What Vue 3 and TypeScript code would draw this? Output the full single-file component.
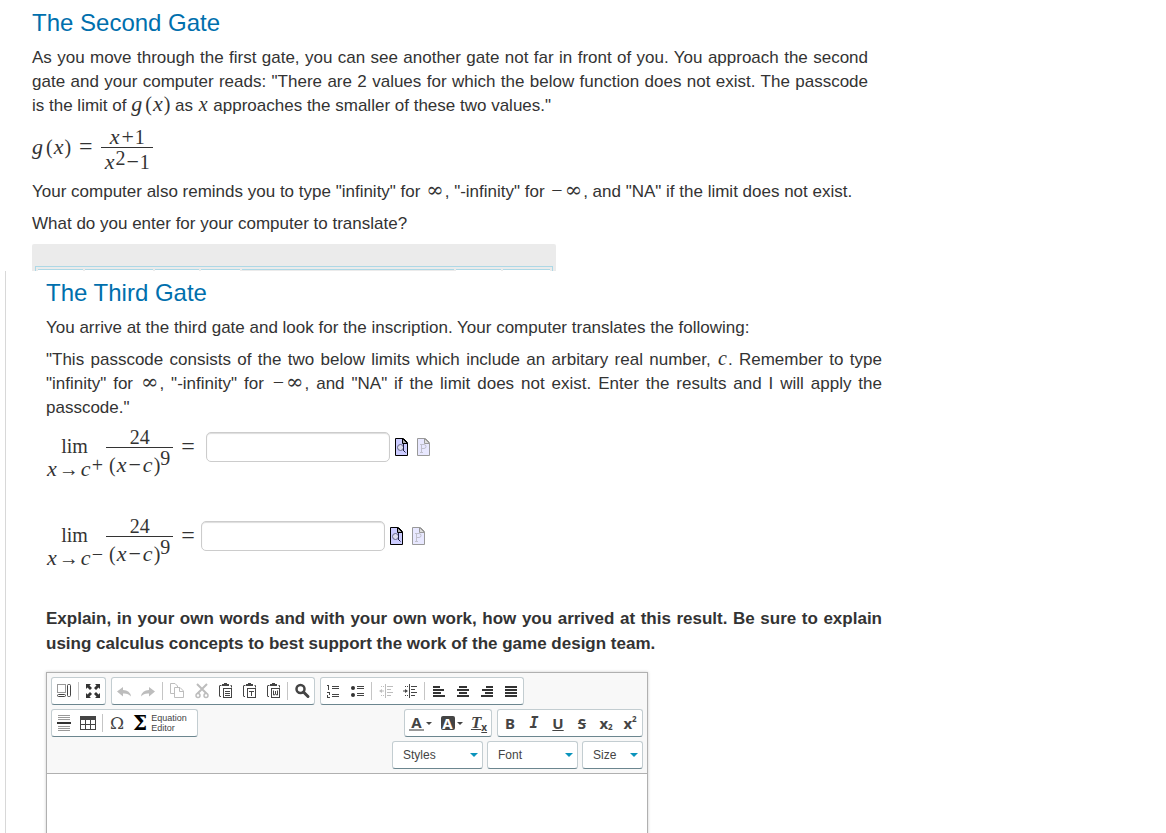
<script setup lang="ts">
import { ref } from 'vue'

interface Limit {
  id: string
  sign: string
  label: string
}

interface Tool {
  name: string
  icon?: string
  disabled?: boolean
  glyph?: string
  kind?: string
  caret?: boolean
}

const limits: Limit[] = [
  { id: 'right', sign: '+', label: 'Limit from the right' },
  { id: 'left', sign: '−', label: 'Limit from the left' },
]
const answers = ref<Record<string, string>>({ right: '', left: '' })

const clip =
  '<path d="M8.500 7.500h-1.500q-.5 0-.5.5v10q0 .5.5.5h1M17.500 7.500h1v2" fill="none" stroke="#444"/><path d="M9 8V6h2V5h3v1h2v2z" fill="#444"/><rect x="10.500" y="10.500" width="8" height="9" fill="#fff" stroke="#444"/>'

function indent(color: string, arrow: string): string {
  return `<g fill="${color}"><path d="M11 6h1v14h-1zM13 8h6v1h-6zM13 11h4v1h-4zM13 14h6v1h-6zM13 17h4v1h-4zM7 8h1v1H7zM9 8h1v1H9zM7 17h1v1H7zM9 17h1v1H9z"/>${arrow}</g>`
}

function bars(rows: number[][]): string {
  return rows
    .map(([x, w], i) => `<rect x="${x}" y="${8 + i * 3}" width="${w}" height="2" fill="#333"/>`)
    .join('')
}

const topGroups: Tool[][][] = [
  [
    [
      {
        name: 'Show blocks',
        icon: '<rect x="5.500" y="6.500" width="8" height="8" fill="none" stroke="#333" stroke-dasharray="1 1"/><rect x="15.500" y="6.500" width="3" height="12" rx="1" fill="none" stroke="#444"/><rect x="5.500" y="16.500" width="8" height="2" rx="1" fill="none" stroke="#444"/>',
      },
    ],
    [
      {
        name: 'Full screen',
        icon: '<path d="M5 6h5L8.500 7.500 11 10l-2 2-2.500-2.500L5 11zM19 6h-5l1.500 1.500L13 10l2 2 2.500-2.500L19 11zM5 20h5l-1.500-1.500L11 16l-2-2-2.500 2.500L5 15zM19 20h-5l1.500-1.500L13 16l2-2 2.500 2.500L19 15z" fill="#333"/>',
      },
    ],
  ],
  [
    [
      { name: 'Undo', disabled: true, icon: '<path d="M5 13.500L11 9v3q7 0 8 6.500-3-3.500-8-3v3z" fill="#bdbdbd"/>' },
      { name: 'Redo', disabled: true, icon: '<path d="M19 13.500L13 9v3q-7 0-8 6.500 3-3.500 8-3v3z" fill="#bdbdbd"/>' },
    ],
    [
      {
        name: 'Copy',
        disabled: true,
        icon: '<path d="M9 15.500H5.500v-10H10L12.500 8v1.500M9.500 9.500H15l3.500 3.500v6.500h-9zM14.500 10v3.500H18" fill="none" stroke="#bdbdbd"/>',
      },
      {
        name: 'Cut',
        disabled: true,
        icon: '<path d="M8 6l10 10M18 6L8 16" stroke="#bdbdbd" stroke-width="2"/><circle cx="9" cy="17.500" r="2" fill="#fff" stroke="#bdbdbd" stroke-width="1.500"/><circle cx="17" cy="17.500" r="2" fill="#fff" stroke="#bdbdbd" stroke-width="1.500"/>',
      },
      { name: 'Paste', icon: clip + '<path d="M12 13h5v1h-5zM12 15h5v1h-5zM12 17h5v1h-5z" fill="#444"/>' },
      { name: 'Paste as plain text', icon: clip + '<path d="M12 13h5v1h-2v4h-1v-4h-2z" fill="#444"/>' },
      { name: 'Paste from Word', icon: clip + '<path d="M12.500 12.500V17h1l1-1.500 1 1.500h1v-4.500M14.500 13v3" fill="none" stroke="#444"/>' },
    ],
    [
      {
        name: 'Find',
        icon: '<circle cx="10.500" cy="11" r="4" fill="none" stroke="#444" stroke-width="2.500"/><path d="M13.500 14l4.500 4.500" stroke="#444" stroke-width="3" stroke-linecap="round"/>',
      },
    ],
  ],
  [
    [
      {
        name: 'Numbered list',
        icon: '<path d="M11 8h7v1h-7zM11 10h7v1h-7zM11 16h7v1h-7zM11 18h7v1h-7zM6 7h2v5H7V8H6zM6 14h3v3H7v2h2v1H6v-3h2v-2H6z" fill="#444"/>',
      },
      {
        name: 'Bulleted list',
        icon: '<path d="M12 8h7v1h-7zM12 10h7v1h-7zM12 15h7v1h-7zM12 17h7v1h-7z" fill="#444"/><circle cx="8" cy="10" r="2" fill="#333"/><circle cx="8" cy="17" r="2" fill="#333"/>',
      },
    ],
    [
      { name: 'Decrease indent', disabled: true, icon: indent('#bdbdbd', '<path d="M5 13l3-2v1.500h2v1H8V15z"/>') },
      { name: 'Increase indent', icon: indent('#444', '<path d="M10 13l-3-2v1.500H5v1h2V15z"/>') },
    ],
    [
      { name: 'Align left', icon: bars([[6, 7], [6, 11], [6, 8], [6, 12]]) },
      { name: 'Center', icon: bars([[8, 8], [6, 12], [8, 8], [6, 12]]) },
      { name: 'Align right', icon: bars([[11, 7], [7, 11], [10, 8], [6, 12]]) },
      { name: 'Justify', icon: bars([[6, 12], [6, 12], [6, 12], [6, 12]]) },
    ],
  ],
]

const insertTools: Tool[] = [
  {
    name: 'Horizontal line',
    icon: '<path d="M6 5h12v1H6zM6 7h12v1H6zM6 9h12v1H6zM6 16h12v1H6zM6 18h12v1H6zM6 20h12v1H6z" fill="#999"/><path d="M5 12h14v2H5z" fill="#333"/>',
  },
  {
    name: 'Table',
    icon: '<path d="M4 6h16v14H4zM5 10v4h4v-4zM10 10v4h4v-4zM15 10v4h4v-4zM5 15v4h4v-4zM10 15v4h4v-4zM15 15v4h4v-4z" fill="#444" fill-rule="evenodd"/>',
  },
]

const colorTools: Tool[] = [
  { name: 'Text color', glyph: 'A', kind: 'fore', caret: true },
  { name: 'Background color', glyph: 'A', kind: 'back', caret: true },
  { name: 'Remove format', glyph: 'T', kind: 'clear' },
]

const fontTools: Tool[] = [
  { name: 'Bold', glyph: 'B', kind: 'bold' },
  { name: 'Italic', glyph: 'I', kind: 'italic' },
  { name: 'Underline', glyph: 'U', kind: 'underline' },
  { name: 'Strikethrough', glyph: 'S', kind: 'strike' },
  { name: 'Subscript', glyph: 'x', kind: 'sub' },
  { name: 'Superscript', glyph: 'x', kind: 'sup' },
]

const combos = ['Styles', 'Font', 'Size']
</script>

<template>
  <main class="page">
    <section class="second">
      <h2>The Second Gate</h2>
      <p class="just">
        As you move through the first gate, you can see another gate not far in front of you. You approach the second
        gate and your computer reads: "There are 2 values for which the below function does not exist. The passcode is
        the limit of <span class="m"><i class="g">g</i>(<i>x</i>)</span> as <i class="m">x</i> approaches the smaller
        of these two values."
      </p>
      <div class="formula">
        <span class="side"><i class="g">g</i>(<i>x</i>)</span>
        <span class="eq">=</span>
        <span class="frac">
          <span class="num"><i>x</i><b>+</b>1</span>
          <span class="den"><i>x</i><sup>2</sup><b>−</b>1</span>
        </span>
      </div>
      <p>
        Your computer also reminds you to type "infinity" for <span class="inf">∞</span>, "-infinity" for
        <span class="inf"><span class="m neg">−</span>∞</span>, and "NA" if the limit does not exist.
      </p>
      <p>What do you enter for your computer to translate?</p>
      <div class="panel">
        <div class="panel-frame"><div class="panel-tabs"><i></i><i></i><i></i><i></i><i></i><i></i><i></i></div></div>
      </div>
    </section>

    <section class="third">
      <h2>The Third Gate</h2>
      <p>You arrive at the third gate and look for the inscription. Your computer translates the following:</p>
      <p class="just quote">
        "This passcode consists of the two below limits which include an arbitary real number, <i class="m">c</i>.
        Remember to type "infinity" for <span class="inf">∞</span>, "-infinity" for
        <span class="inf"><span class="m neg">−</span>∞</span>, and "NA" if the limit does not exist. Enter the results
        and I will apply the passcode."
      </p>

      <div v-for="l in limits" :key="l.id" class="limit">
        <label :for="l.id" class="expr" :aria-label="l.label">
          <span class="lim">
            <span>lim</span>
            <span class="approach"><i>x</i><span class="arrow">→</span><i>c</i><sup>{{ l.sign }}</sup></span>
          </span>
          <span class="frac">
            <span class="num">24</span>
            <span class="den">(<i>x</i><b>−</b><i>c</i>)<sup>9</sup></span>
          </span>
          <span class="eq">=</span>
        </label>
        <input :id="l.id" v-model="answers[l.id]" type="text" :class="l.id" />
        <button type="button" class="doc" aria-label="Preview answer">
          <svg width="13" height="18" viewBox="0 0 13 18">
            <path d="M.5 .5h8l4 4v13H.5z" fill="#ccf" stroke="#000" />
            <path d="M7.500 .5v5h5z" fill="#aaa" stroke="#000" />
            <circle cx="5.500" cy="9.500" r="3" fill="#dde" stroke="#668" />
            <path d="M8.500 6v6M8 12l2.500 2.500" fill="none" stroke="#224" />
          </svg>
        </button>
        <button type="button" class="doc" aria-label="Syntax help">
          <svg width="13" height="18" viewBox="0 0 13 18">
            <path d="M.5 .5h8l4 4v13H.5z" fill="#e8e8ff" stroke="#999" />
            <path d="M7.500 .5v5h5z" fill="#ddd" stroke="#999" />
            <path d="M3 6.500h4q2 0 2 2t-2 2H5M4.500 6.500v8M3 14.500h3" fill="none" stroke="#c0c0cc" />
          </svg>
        </button>
      </div>

      <p class="just strong">
        Explain, in your own words and with your own work, how you arrived at this result. Be sure to explain using
        calculus concepts to best support the work of the game design team.
      </p>

      <div class="editor">
        <div class="toolbar">
          <div class="row">
            <div v-for="(group, gi) in topGroups" :key="gi" class="group">
              <div v-for="(part, pi) in group" :key="pi" class="part">
                <button v-for="t in part" :key="t.name" type="button" :aria-label="t.name" :disabled="t.disabled">
                  <svg width="24" height="26" viewBox="0 0 24 26" v-html="t.icon"></svg>
                </button>
              </div>
            </div>
          </div>
          <div class="row">
            <div class="group">
              <div class="part">
                <button v-for="t in insertTools" :key="t.name" type="button" :aria-label="t.name">
                  <svg width="24" height="26" viewBox="0 0 24 26" v-html="t.icon"></svg>
                </button>
              </div>
              <div class="part">
                <button type="button" class="omega" aria-label="Special character">Ω</button>
                <button type="button" class="equation">
                  <span class="sigma">Σ</span><span class="eqtext">Equation<br />Editor</span>
                </button>
              </div>
            </div>
            <div class="group push">
              <button
                v-for="t in colorTools"
                :key="t.name"
                type="button"
                :class="['glyph', { drop: t.caret }]"
                :aria-label="t.name"
              >
                <span :class="t.kind">{{ t.glyph }}<small v-if="t.kind === 'clear'">x</small></span>
                <span v-if="t.caret" class="caret"></span>
              </button>
            </div>
            <div class="group">
              <button v-for="t in fontTools" :key="t.name" type="button" class="glyph" :aria-label="t.name">
                <span :class="t.kind">{{ t.glyph }}<small v-if="t.kind === 'sub' || t.kind === 'sup'">2</small></span>
              </button>
            </div>
          </div>
          <div class="row combos">
            <span v-for="c in combos" :key="c" :class="['combo', c.toLowerCase()]">
              <select :aria-label="c">
                <option>{{ c }}</option>
              </select>
            </span>
          </div>
        </div>
        <textarea aria-label="Explanation"></textarea>
      </div>
    </section>
  </main>
</template>

<style>
body {
  margin: 0;
  background: #fff;
}
html {
  overflow: hidden;
}
</style>

<style scoped>
.page {
  height: 100vh;
  overflow: hidden;
  display: flex;
  flex-direction: column;
  font: 17px/24px 'Liberation Sans', Arial, sans-serif;
  color: #333;
}
h2 {
  margin: 0 0 9px;
  font-size: 24px;
  line-height: 28px;
  font-weight: 400;
  color: #006fad;
}
p {
  margin: 0 0 8px;
}
.just {
  text-align: justify;
}
.second {
  padding: 9px 32px 0;
}
.second > p {
  max-width: 836px;
}
.third {
  flex: 1;
  margin-left: 5px;
  padding: 8px 40px 0;
  border-left: 1px solid #d8d8d8;
}
.third > p {
  max-width: 836px;
}
.third > .quote {
  margin-bottom: 0;
}
.third > .strong {
  font-weight: 700;
  line-height: 25px;
  margin: 35px 0 16px;
}
.m,
.formula,
.expr {
  font-family: 'Liberation Serif', 'Times New Roman', serif;
  font-size: 20px;
  line-height: 20px;
}
i {
  font-size: 22px;
  margin: 0 1px;
}
.inf {
  margin: 0 1px;
  font-family: 'DejaVu Serif', serif;
  font-size: 21px;
  line-height: 20px;
  white-space: nowrap;
}
.neg {
  margin: 0 2px 0 1px;
}
.g {
  margin: 0 3px 0 0;
}
.formula {
  display: flex;
  align-items: flex-start;
  height: 50px;
  margin-bottom: 4px;
}
.side {
  line-height: 42px;
}
.eq {
  font-size: 24px;
  line-height: 40px;
  margin: 0 8px;
}
.frac {
  display: flex;
  flex-direction: column;
  padding-top: 1px;
}
.num,
.den {
  display: flex;
  align-items: center;
  justify-content: center;
}
.num {
  height: 20px;
  border-bottom: 1px solid #333;
}
.den {
  height: 28px;
  padding: 0 3px;
}
.frac b {
  font-weight: 400;
  font-size: 22px;
  margin: 0 1px;
}
.frac sup,
.lim sup {
  font-size: 20px;
  line-height: 20px;
  align-self: flex-start;
}
.panel {
  display: flex;
  max-width: 524px;
  height: 27px;
  background: #ebebeb;
  border-radius: 2px 2px 0 0;
}
.panel-frame {
  flex: 1;
  margin: 22px 3px 0;
  padding: 2px 2px 0;
  border: 1px solid #add8e6;
  border-bottom: 0;
}
.panel-tabs {
  display: grid;
  grid-template-columns: 46fr 70fr 45fr 40fr 218fr 46fr 48fr;
  gap: 2px;
}
.panel-tabs i {
  height: 1px;
  margin: 0;
  border-top: 1px solid #add8e6;
  background: #fff;
}
.panel-tabs i:nth-child(5) {
  background: #ebebeb;
}
.limit {
  display: flex;
  align-items: flex-start;
  height: 62px;
  margin-bottom: 27px;
}
.expr {
  display: flex;
  align-items: flex-start;
}
.lim {
  display: flex;
  flex-direction: column;
  align-items: center;
  width: 57px;
  margin-right: 3px;
  padding-top: 16px;
}
.approach {
  display: flex;
  align-items: flex-end;
  height: 24px;
  margin-top: -1px;
}
.arrow {
  margin: 0 1px;
}
.expr .frac {
  padding-top: 7px;
}
.expr .den {
  height: 34px;
}
.expr .eq {
  line-height: 52px;
  margin: 0 6px 0 8px;
}
.limit input {
  box-sizing: border-box;
  width: 184px;
  height: 30px;
  margin: 12px 5px 0 0;
  padding: 4px 8px;
  border: 1px solid #ccc;
  border-radius: 5px;
  box-shadow: inset 0 1px 1px #ddd;
  font: inherit;
}
.limit .right {
  margin-left: 5px;
}
button {
  padding: 0;
  border: 0;
  background: none;
  color: #444;
}
.doc {
  display: flex;
  margin: 18px 9px 0 0;
}
.editor {
  max-width: 600px;
  border: 1px solid #b0b0b0;
  box-shadow: 0 0 3px #ccc;
}
.toolbar {
  display: flex;
  flex-direction: column;
  gap: 4px;
  padding: 4px;
  background: #f8f8f8;
  border-bottom: 1px solid #b0b0b0;
}
.row {
  display: flex;
  gap: 5px;
}
.group,
.combo {
  display: flex;
  box-sizing: border-box;
  height: 28px;
  background: #fff;
  border: 1px solid #c3cdd1;
  border-bottom-color: #6c868f;
  border-radius: 3px;
}
.part {
  display: flex;
  align-items: center;
}
.part + .part::before {
  content: '';
  width: 1px;
  height: 18px;
  margin: 0 2px;
  background: #c5c5c5;
}
.part svg {
  display: block;
}
.push {
  margin-left: auto;
}
.omega {
  width: 24px;
  font: 17px/26px 'DejaVu Serif', serif;
}
.equation {
  display: flex;
  align-items: center;
  width: 68px;
  gap: 4px;
  padding-left: 4px;
}
.sigma {
  font: 700 20px/26px 'DejaVu Serif', serif;
  color: #000;
}
.eqtext {
  font: 9px/10px 'Liberation Sans', Arial, sans-serif;
  text-align: left;
}
.glyph {
  display: flex;
  align-items: center;
  justify-content: center;
  width: 24px;
  height: 26px;
  font: 700 15px/16px 'Noto Sans', sans-serif;
}
.glyph.drop {
  width: 31px;
  gap: 2px;
}
.caret {
  border: 3px solid transparent;
  border-top-color: #444;
  border-bottom: 0;
}
.fore {
  width: 15px;
  line-height: 14px;
  border-bottom: 2px solid #999;
}
.back {
  width: 14px;
  line-height: 14px;
  background: #444;
  border-radius: 2px;
  color: #fff;
}
.clear {
  font-family: 'Liberation Serif', serif;
  font-style: italic;
  font-size: 17px;
  text-decoration: underline;
  display: flex;
}
.clear small {
  align-self: flex-end;
  font: 700 10px/8px 'Noto Sans', sans-serif;
}
.italic {
  font-family: 'DejaVu Sans Mono', monospace;
  font-style: italic;
}
.underline {
  text-decoration: underline;
}
.strike {
  text-decoration: line-through;
}
.sub,
.sup {
  display: flex;
}
.sub small,
.sup small {
  font-size: 8px;
  line-height: 8px;
}
.sub small {
  align-self: flex-end;
}
.combos {
  justify-content: flex-end;
  gap: 4px;
}
.combo {
  position: relative;
  width: 91px;
}
.combo.size {
  width: 61px;
}
.combo::after {
  content: '';
  position: absolute;
  right: 4px;
  top: 11px;
  border: 4px solid transparent;
  border-top-color: #0a94bc;
  border-bottom: 0;
  pointer-events: none;
}
select {
  appearance: none;
  flex: 1;
  min-width: 0;
  padding: 0 10px;
  border: 0;
  background: none;
  color: #444;
  font: 12px 'Liberation Sans', Arial, sans-serif;
}
textarea {
  display: block;
  box-sizing: border-box;
  width: 100%;
  height: 200px;
  padding: 8px;
  border: 0;
  resize: none;
}
</style>
